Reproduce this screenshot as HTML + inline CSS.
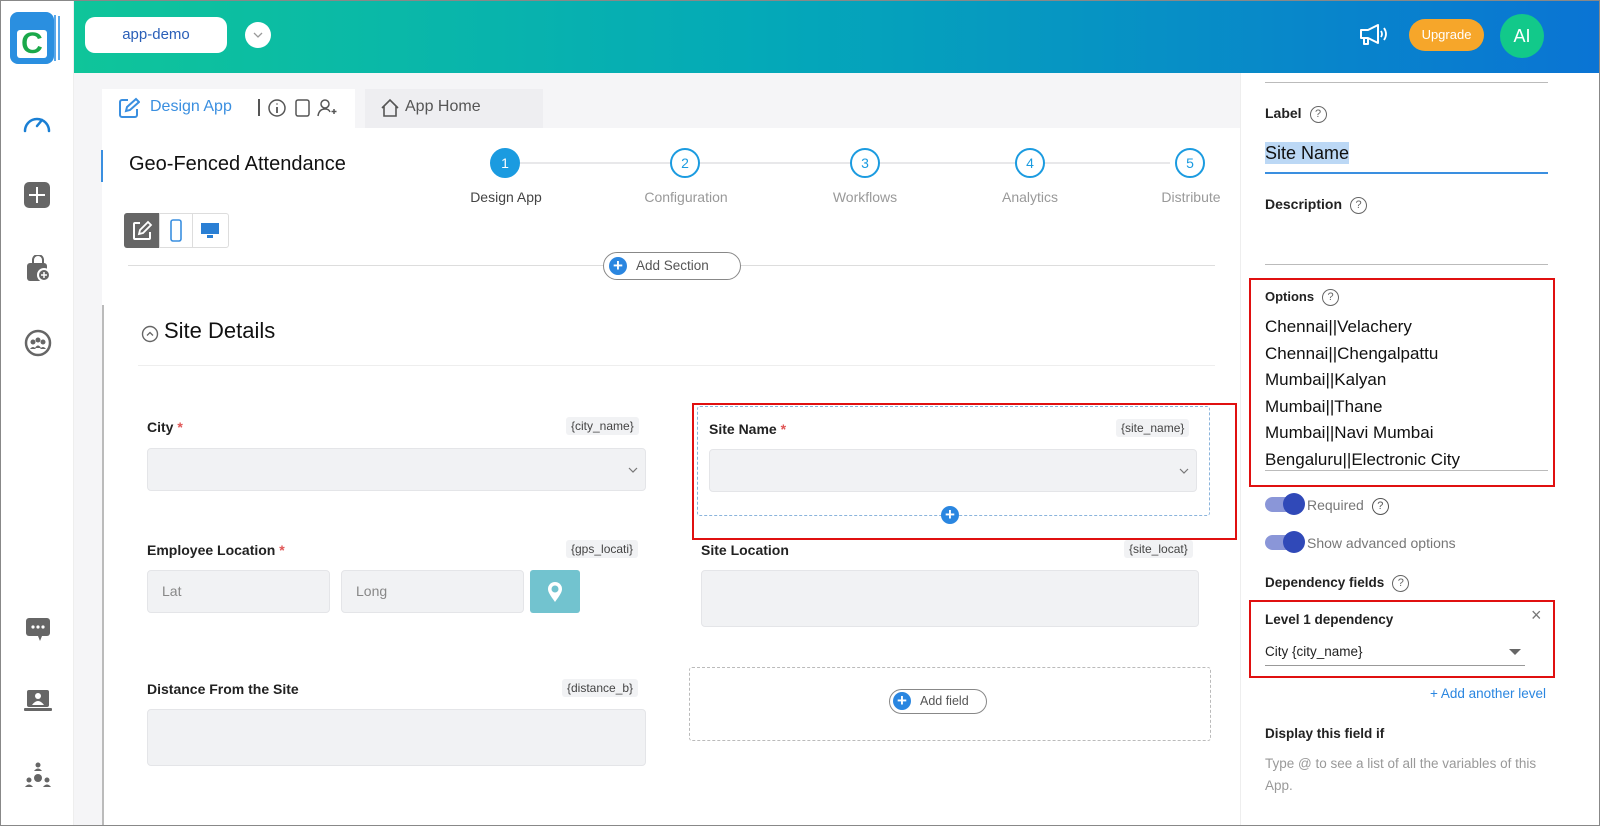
<!DOCTYPE html>
<html><head><meta charset="utf-8"><style>
*{box-sizing:border-box;margin:0;padding:0}
body{width:1600px;height:826px;overflow:hidden;font-family:"Liberation Sans",sans-serif;background:#fff;position:relative;color:#222}
.a{position:absolute}
.hdr{left:74px;top:0;width:1526px;height:73px;background:linear-gradient(90deg,#0fc59a 0%,#04a9b8 45%,#0a74d4 100%)}
.side{left:0;top:0;width:74px;height:826px;background:#fff;border-right:1px solid #eee}
.lbl{font-size:14px;font-weight:bold;color:#222}
.req{color:#e05555}
.tag{font-size:12px;color:#444;background:#f1f2f4;padding:2px 5px;border-radius:3px}
.inp{background:#f1f2f4;border:1px solid #e4e5e8;border-radius:4px}
.q{display:inline-block;width:17px;height:17px;border:1.5px solid #666;border-radius:50%;font-size:11px;text-align:center;line-height:14px;color:#666;vertical-align:middle;margin-left:8px;font-weight:normal}
.step{width:30px;height:30px;border-radius:50%;border:2px solid #1b9be0;color:#1b9be0;font-size:14px;text-align:center;line-height:26px;background:#fff}
.stl{font-size:14px;color:#999;text-align:center;width:120px}
.opt{font-size:17px;color:#111;line-height:26.5px}
.plus{display:inline-block;width:18px;height:18px;border-radius:50%;background:#2a86e0;color:#fff;font-size:17px;line-height:17px;text-align:center;font-weight:bold}
</style></head><body>
<div class="a side"></div>
<div class="a hdr"></div>
<!-- logo -->
<div class="a" style="left:10px;top:12px;width:52px;height:52px">
<div class="a" style="left:0;top:0;width:44px;height:52px;background:#2a8fe0;border-radius:8px"></div>
<div class="a" style="left:44px;top:3px;width:2px;height:46px;background:#5aa8ea"></div>
<div class="a" style="left:48px;top:4px;width:2px;height:44px;background:#5aa8ea"></div>
<div class="a" style="left:7px;top:18px;width:30px;height:28px;background:#fff;border-radius:3px;color:#1aa84a;font-weight:bold;font-size:30px;line-height:28px;text-align:center">C</div>
</div>
<!-- sidebar icons -->
<svg class="a" style="left:22px;top:110px" width="30" height="24" viewBox="0 0 30 24"><path d="M3 21A12 12 0 1 1 27 21" fill="none" stroke="#1a7fd4" stroke-width="2.5" stroke-linecap="round"/><path d="M15 16L20 10" stroke="#1a7fd4" stroke-width="2.5" stroke-linecap="round"/></svg>
<svg class="a" style="left:24px;top:182px" width="26" height="26"><rect width="26" height="26" rx="5" fill="#666"/><path d="M13 5V21M5 13H21" stroke="#fff" stroke-width="2"/></svg>
<svg class="a" style="left:25px;top:255px" width="26" height="28"><path d="M8 8V5a5 5 0 0 1 10 0v3" fill="none" stroke="#666" stroke-width="2"/><rect x="2" y="8" width="20" height="18" rx="3" fill="#666"/><circle cx="19" cy="20" r="6" fill="#666" stroke="#fff" stroke-width="2"/><path d="M19 17v6M16 20h6" stroke="#fff" stroke-width="1.5"/></svg>
<svg class="a" style="left:24px;top:329px" width="28" height="28"><circle cx="14" cy="14" r="12" fill="none" stroke="#666" stroke-width="2.5"/><circle cx="9" cy="13" r="2.5" fill="#666"/><circle cx="14" cy="11" r="2.5" fill="#666"/><circle cx="19" cy="13" r="2.5" fill="#666"/><path d="M6 20q3-4 6 0M11 19q3-5 6 0M16 20q3-4 6 0" fill="#666"/></svg>
<svg class="a" style="left:26px;top:618px" width="24" height="24"><rect width="24" height="18" rx="3" fill="#666"/><path d="M12 18l2 5 2-5z" fill="#666"/><circle cx="7" cy="9" r="1.6" fill="#fff"/><circle cx="12" cy="9" r="1.6" fill="#fff"/><circle cx="17" cy="9" r="1.6" fill="#fff"/></svg>
<svg class="a" style="left:24px;top:690px" width="28" height="24"><rect x="3" y="0" width="22" height="17" rx="2" fill="#666"/><circle cx="14" cy="6" r="3" fill="#fff"/><path d="M8 15q6-8 12 0" fill="#fff"/><rect x="0" y="18" width="28" height="3" rx="1" fill="#666"/></svg>
<svg class="a" style="left:24px;top:762px" width="28" height="28"><circle cx="14" cy="3" r="2.5" fill="#666"/><path d="M10 9q4-5 8 0z" fill="#666"/><circle cx="14" cy="16" r="4" fill="#666"/><circle cx="5" cy="18" r="2.5" fill="#666"/><path d="M1 25q4-5 8 0z" fill="#666"/><circle cx="23" cy="18" r="2.5" fill="#666"/><path d="M19 25q4-5 8 0z" fill="#666"/></svg>
<!-- header -->
<div class="a" style="left:85px;top:17px;width:142px;height:36px;background:#fff;border-radius:10px;color:#2a5fb8;font-size:15px;text-align:center;line-height:36px">app-demo</div>
<div class="a" style="left:245px;top:22px;width:26px;height:26px;background:#fff;border-radius:50%"><svg width="26" height="26"><path d="M9 11l4 4 4-4" fill="none" stroke="#999" stroke-width="1.3"/></svg></div>
<svg class="a" style="left:1358px;top:23px" width="32" height="24"><path d="M3 7h7l10-5v18l-10-5H3z M6 15v6h4v-6" fill="none" stroke="#fff" stroke-width="2" stroke-linejoin="round"/><path d="M23 8q2 3 0 6M26 5q4 6 0 12" fill="none" stroke="#fff" stroke-width="1.8"/></svg>
<div class="a" style="left:1409px;top:19px;width:75px;height:32px;background:#f6a62a;border-radius:16px;color:#fff;font-size:13px;text-align:center;line-height:32px">Upgrade</div>
<div class="a" style="left:1500px;top:14px;width:44px;height:44px;background:#12c98a;border-radius:50%;color:#fff;font-size:18px;text-align:center;line-height:44px">AI</div>
<!-- tab bar -->
<div class="a" style="left:74px;top:73px;width:1166px;height:55px;background:#f5f5f7"></div>
<div class="a" style="left:74px;top:128px;width:28px;height:698px;background:#f5f5f7"></div>
<div class="a" style="left:102px;top:89px;width:253px;height:39px;background:#fff"></div>
<div class="a" style="left:365px;top:89px;width:178px;height:39px;background:#eeeef1"></div>
<svg class="a" style="left:118px;top:97px" width="22" height="22"><path d="M10 3H4a2 2 0 0 0-2 2v13a2 2 0 0 0 2 2h13a2 2 0 0 0 2-2v-6" fill="none" stroke="#3a8fe0" stroke-width="2"/><path d="M8 14l1-4 9-8 3 3-9 8z" fill="none" stroke="#3a8fe0" stroke-width="2"/></svg>
<div class="a" style="left:150px;top:98px;font-size:16px;color:#3a8fe0">Design App</div>
<div class="a" style="left:258px;top:99px;width:2px;height:17px;background:#555"></div>
<svg class="a" style="left:267px;top:98px" width="76" height="20"><circle cx="10" cy="10" r="8" fill="none" stroke="#555" stroke-width="1.5"/><path d="M10 9v6M10 5.5v1" stroke="#555" stroke-width="1.8"/><rect x="29" y="2" width="13" height="16" rx="2" fill="none" stroke="#555" stroke-width="1.5"/><circle cx="58" cy="6" r="4" fill="none" stroke="#555" stroke-width="1.5"/><path d="M51 18q1-7 7-7q4 0 5 3M67 11v5M64.5 13.5h5" fill="none" stroke="#555" stroke-width="1.5"/></svg>
<svg class="a" style="left:380px;top:98px" width="20" height="20"><path d="M2 10L10 2l8 8M4 8v10h12V8" fill="none" stroke="#555" stroke-width="1.6"/></svg>
<div class="a" style="left:405px;top:98px;font-size:16px;color:#555">App Home</div>
<!-- title -->
<div class="a" style="left:101px;top:150px;width:2px;height:32px;background:#3a8fe0"></div>
<div class="a" style="left:129px;top:153px;font-size:20px;color:#111">Geo-Fenced Attendance</div>
<!-- stepper -->
<div class="a" style="left:520px;top:162px;width:650px;height:2px;background:#e8e8ea"></div>
<div class="a step" style="left:490px;top:148px;background:#1b9be0;color:#fff">1</div>
<div class="a step" style="left:670px;top:148px">2</div>
<div class="a step" style="left:850px;top:148px">3</div>
<div class="a step" style="left:1015px;top:148px">4</div>
<div class="a step" style="left:1175px;top:148px">5</div>
<div class="a stl" style="left:446px;top:189px;color:#444">Design App</div>
<div class="a stl" style="left:626px;top:189px">Configuration</div>
<div class="a stl" style="left:805px;top:189px">Workflows</div>
<div class="a stl" style="left:970px;top:189px">Analytics</div>
<div class="a stl" style="left:1131px;top:189px">Distribute</div>
<!-- view toggle -->
<div class="a" style="left:124px;top:213px;width:105px;height:35px;border:1px solid #ddd;border-radius:3px;background:#fff"></div>
<div class="a" style="left:124px;top:213px;width:35px;height:35px;background:#666;border-radius:3px 0 0 3px"></div>
<div class="a" style="left:192px;top:214px;width:1px;height:33px;background:#ddd"></div>
<div class="a" style="left:159px;top:214px;width:1px;height:33px;background:#ddd"></div>
<svg class="a" style="left:131px;top:220px" width="22" height="22"><path d="M9 3H4a1 1 0 0 0-1 1v14a1 1 0 0 0 1 1h14a1 1 0 0 0 1-1v-6" fill="none" stroke="#fff" stroke-width="2"/><path d="M8 14l1-4 8-8 3 3-8 8z" fill="none" stroke="#fff" stroke-width="1.8"/></svg>
<svg class="a" style="left:169px;top:219px" width="14" height="24"><rect x="2" y="1" width="10" height="21" rx="2" fill="none" stroke="#3a8fe0" stroke-width="1.6"/></svg>
<svg class="a" style="left:200px;top:222px" width="20" height="18"><rect x="1" y="1" width="18" height="11" fill="#2a7fd4"/><rect x="7" y="13" width="6" height="3" fill="#2a7fd4"/></svg>
<!-- add section -->
<div class="a" style="left:128px;top:265px;width:1087px;height:1px;background:#ddd"></div>
<div class="a" style="left:603px;top:252px;width:138px;height:28px;border:1.5px solid #888;border-radius:14px;background:#fff;font-size:13.5px;color:#555;line-height:25px;padding-left:32px">Add Section</div>
<span class="a plus" style="left:609px;top:257px">+</span>
<!-- section -->
<div class="a" style="left:102px;top:305px;width:2px;height:521px;background:#bbb"></div>
<svg class="a" style="left:141px;top:325px" width="18" height="18"><circle cx="9" cy="9" r="7.5" fill="none" stroke="#666" stroke-width="1.4"/><path d="M6 10.5l3-3 3 3" fill="none" stroke="#666" stroke-width="1.3"/></svg>
<div class="a" style="left:164px;top:318px;font-size:22px;color:#111">Site Details</div>
<div class="a" style="left:138px;top:365px;width:1077px;height:1px;background:#eee"></div>
<!-- city -->
<div class="a lbl" style="left:147px;top:419px">City <span class="req">*</span></div>
<div class="a tag" style="left:566px;top:417px">{city_name}</div>
<div class="a inp" style="left:147px;top:448px;width:499px;height:43px"><svg class="a" style="right:6px;top:16px" width="12" height="10"><path d="M2 3l4 4 4-4" fill="none" stroke="#777" stroke-width="1.2"/></svg></div>
<!-- emp loc -->
<div class="a lbl" style="left:147px;top:542px">Employee Location <span class="req">*</span></div>
<div class="a tag" style="left:566px;top:540px">{gps_locati}</div>
<div class="a inp" style="left:147px;top:570px;width:183px;height:43px;font-size:14px;color:#888;line-height:41px;padding-left:14px">Lat</div>
<div class="a inp" style="left:341px;top:570px;width:183px;height:43px;font-size:14px;color:#888;line-height:41px;padding-left:14px">Long</div>
<div class="a" style="left:530px;top:570px;width:50px;height:43px;background:#72c3cf;border-radius:3px"><svg class="a" style="left:16px;top:11px" width="18" height="22"><path d="M9 21C4 14 2 11 2 8a7 7 0 0 1 14 0c0 3-2 6-7 13z" fill="#fff"/><circle cx="9" cy="8" r="3.5" fill="#72c3cf"/></svg></div>
<!-- distance -->
<div class="a lbl" style="left:147px;top:681px">Distance From the Site</div>
<div class="a tag" style="left:562px;top:679px">{distance_b}</div>
<div class="a inp" style="left:147px;top:709px;width:499px;height:57px"></div>
<!-- site name -->
<div class="a" style="left:697px;top:406px;width:513px;height:110px;border:1px dashed #8bb4dc;border-radius:3px"></div>
<div class="a" style="left:692px;top:403px;width:545px;height:137px;border:2px solid #e01010"></div>
<div class="a lbl" style="left:709px;top:421px">Site Name <span class="req">*</span></div>
<div class="a tag" style="left:1116px;top:419px">{site_name}</div>
<div class="a inp" style="left:709px;top:449px;width:488px;height:43px"><svg class="a" style="right:6px;top:16px" width="12" height="10"><path d="M2 3l4 4 4-4" fill="none" stroke="#777" stroke-width="1.2"/></svg></div>
<span class="a plus" style="left:941px;top:506px">+</span>
<!-- site location -->
<div class="a lbl" style="left:701px;top:542px">Site Location</div>
<div class="a tag" style="left:1124px;top:540px">{site_locat}</div>
<div class="a inp" style="left:701px;top:570px;width:498px;height:57px"></div>
<!-- add field -->
<div class="a" style="left:689px;top:667px;width:522px;height:74px;border:1px dashed #bbb;border-radius:3px"></div>
<div class="a" style="left:889px;top:689px;width:98px;height:25px;border:1.5px solid #888;border-radius:13px;font-size:12.5px;color:#555;line-height:22px;padding-left:30px">Add field</div>
<span class="a plus" style="left:893px;top:692px">+</span>
<!-- right panel -->
<div class="a" style="left:1240px;top:73px;width:1px;height:753px;background:#eee"></div>
<div class="a" style="left:1265px;top:82px;width:283px;height:1px;background:#bbb"></div>
<div class="a lbl" style="left:1265px;top:105px">Label<span class="q">?</span></div>
<div class="a" style="left:1265px;top:142px;font-size:18px;color:#111;background:#bcd8f5;line-height:22px">Site Name</div>
<div class="a" style="left:1265px;top:172px;width:283px;height:2px;background:#3a8fe0"></div>
<div class="a lbl" style="left:1265px;top:196px">Description<span class="q">?</span></div>
<div class="a" style="left:1265px;top:264px;width:283px;height:1px;background:#bbb"></div>
<div class="a" style="left:1249px;top:278px;width:306px;height:209px;border:2px solid #e01010"></div>
<div class="a lbl" style="left:1265px;top:289px;font-size:13px">Options<span class="q">?</span></div>
<div class="a opt" style="left:1265px;top:314px">Chennai||Velachery<br>Chennai||Chengalpattu<br>Mumbai||Kalyan<br>Mumbai||Thane<br>Mumbai||Navi Mumbai<br>Bengaluru||Electronic City</div>
<div class="a" style="left:1265px;top:470px;width:283px;height:1px;background:#bbb"></div>
<!-- toggles -->
<div class="a" style="left:1265px;top:497px;width:34px;height:15px;background:#8a96d8;border-radius:8px"></div>
<div class="a" style="left:1283px;top:493px;width:22px;height:22px;background:#3049b8;border-radius:50%"></div>
<div class="a" style="left:1307px;top:497px;font-size:14px;color:#777">Required<span class="q" style="border-color:#555;color:#555">?</span></div>
<div class="a" style="left:1265px;top:535px;width:34px;height:15px;background:#8a96d8;border-radius:8px"></div>
<div class="a" style="left:1283px;top:531px;width:22px;height:22px;background:#3049b8;border-radius:50%"></div>
<div class="a" style="left:1307px;top:535px;font-size:14px;color:#777">Show advanced options</div>
<div class="a lbl" style="left:1265px;top:575px;font-size:13.5px">Dependency fields<span class="q">?</span></div>
<div class="a" style="left:1249px;top:600px;width:306px;height:78px;border:2px solid #e01010"></div>
<div class="a lbl" style="left:1265px;top:612px;font-size:13.5px">Level 1 dependency</div>
<div class="a" style="left:1531px;top:605px;font-size:18px;color:#777">×</div>
<div class="a" style="left:1265px;top:644px;font-size:13.5px;color:#222">City {city_name}</div>
<svg class="a" style="left:1509px;top:649px" width="12" height="7"><path d="M0 0h12L6 6z" fill="#666"/></svg>
<div class="a" style="left:1265px;top:665px;width:260px;height:1px;background:#999"></div>
<div class="a" style="left:1430px;top:686px;font-size:13.5px;color:#2a86e0">+ Add another level</div>
<div class="a lbl" style="left:1265px;top:726px;font-size:13.5px">Display this field if</div>
<div class="a" style="left:1265px;top:753px;width:290px;font-size:13.5px;color:#999;line-height:22px">Type @ to see a list of all the variables of this App.</div>
<div class="a" style="left:0;top:0;width:1600px;height:826px;border:1px solid #888;pointer-events:none"></div>
</body></html>
